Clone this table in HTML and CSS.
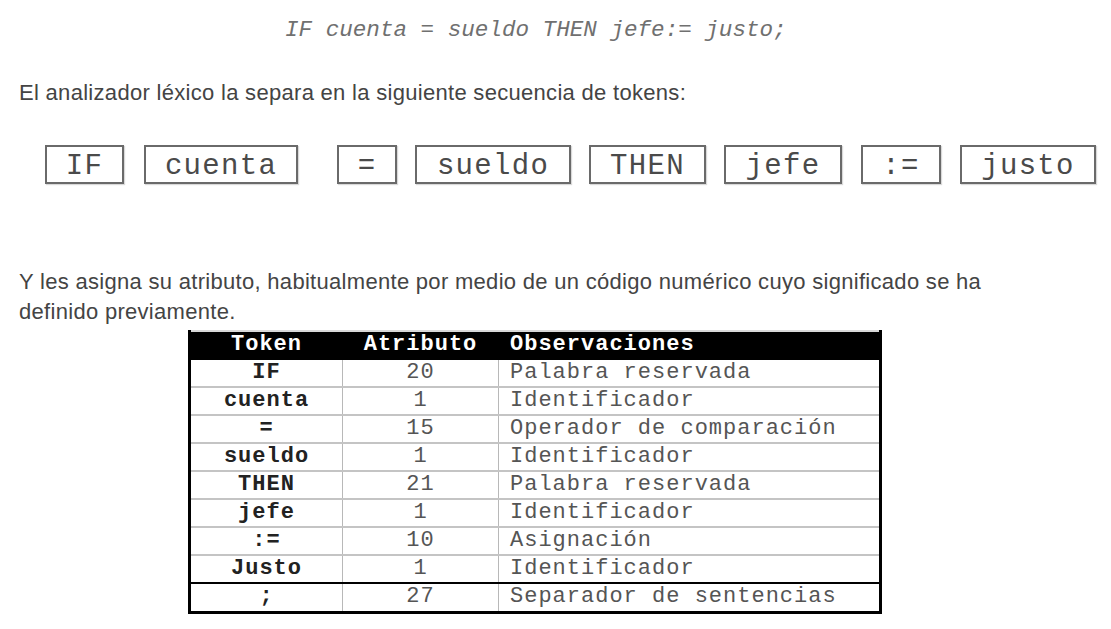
FILE: index.html
```html
<!DOCTYPE html>
<html lang="es">
<head>
<meta charset="utf-8">
<link rel="stylesheet" href="styles.css">
</head>
<body>
<div class="page">
  <p class="code">IF cuenta = sueldo THEN jefe:= justo;</p>
  <p class="text p1">El analizador léxico la separa en la siguiente secuencia de tokens:</p>
  <div class="tokens">
    <span class="tok w-if">IF</span>
    <span class="tok w-cuenta">cuenta</span>
    <span class="tok w-eq">=</span>
    <span class="tok w-sueldo">sueldo</span>
    <span class="tok w-then">THEN</span>
    <span class="tok w-jefe">jefe</span>
    <span class="tok w-asig">:=</span>
    <span class="tok w-justo">justo</span>
  </div>
  <p class="text p2">Y les asigna su atributo, habitualmente por medio de un código numérico cuyo significado se ha definido previamente.</p>
  <div class="table-wrap">
    <table class="tt">
      <thead>
        <tr><th class="c1">Token</th><th class="c2">Atributo</th><th class="c3">Observaciones</th></tr>
      </thead>
      <tbody>
        <tr><td class="c1">IF</td><td class="c2">20</td><td class="c3">Palabra reservada</td></tr>
        <tr><td class="c1">cuenta</td><td class="c2">1</td><td class="c3">Identificador</td></tr>
        <tr><td class="c1">=</td><td class="c2">15</td><td class="c3">Operador de comparación</td></tr>
        <tr><td class="c1">sueldo</td><td class="c2">1</td><td class="c3">Identificador</td></tr>
        <tr><td class="c1">THEN</td><td class="c2">21</td><td class="c3">Palabra reservada</td></tr>
        <tr><td class="c1">jefe</td><td class="c2">1</td><td class="c3">Identificador</td></tr>
        <tr><td class="c1">:=</td><td class="c2">10</td><td class="c3">Asignación</td></tr>
        <tr><td class="c1">Justo</td><td class="c2">1</td><td class="c3">Identificador</td></tr>
        <tr class="last"><td class="c1">;</td><td class="c2">27</td><td class="c3">Separador de sentencias</td></tr>
      </tbody>
    </table>
  </div>
</div>
</body>
</html>
```

FILE: styles.css
```css
html, body {
  margin: 0;
  padding: 0;
  background: #ffffff;
}

.page {
  width: 1111px;
  height: 629px;
  overflow: hidden;
}

.code {
  margin: 0;
  padding: 17px 0 0 285px;
  font-family: "Liberation Mono", "Courier New", monospace;
  font-style: italic;
  font-size: 22.6px;
  line-height: 26px;
  color: #707070;
  white-space: pre;
}

.text {
  margin: 0;
  padding-left: 19px;
  font-family: "Liberation Sans", Arial, sans-serif;
  font-size: 22px;
  letter-spacing: 0.3px;
  line-height: 30px;
  color: #444444;
}

.p1 {
  margin-top: 35px;
}

.p2 {
  margin-top: 83px;
  width: 1000px;
}

.tokens {
  display: flex;
  margin-top: 37px;
  padding-left: 45px;
  gap: 18px;
}

.tok {
  box-sizing: border-box;
  height: 39px;
  padding-top: 4px;
  border: 2px solid #6a6a6a;
  box-shadow: 1px 1px 1px rgba(0, 0, 0, 0.15);
  display: flex;
  align-items: center;
  justify-content: center;
  font-family: "Liberation Mono", "Courier New", monospace;
  font-size: 29px;
  letter-spacing: 1.3px;
  color: #4a4a4a;
}

.w-if { width: 79px; }
.w-cuenta { width: 154px; margin-left: 2px; }
.w-eq { width: 60px; margin-left: 21px; }
.w-sueldo { width: 156px; }
.w-then { width: 117px; }
.w-jefe { width: 118px; }
.w-asig { width: 80px; margin-left: 1px; }
.w-justo { width: 136px; margin-left: 1px; }

.table-wrap {
  margin-top: 3px;
  padding-left: 188px;
}

.tt {
  border-collapse: collapse;
  border-top: 2px solid #d8d8d8;
  font-family: "Liberation Mono", "Courier New", monospace;
  font-size: 22px;
  letter-spacing: 1px;
  color: #555555;
}

.tt th, .tt td {
  box-sizing: border-box;
  height: 28px;
  padding: 0;
  line-height: 26px;
  border-left: 1px solid #b8b8b8;
  border-right: 1px solid #b8b8b8;
  border-bottom: 2px solid #c4c4c4;
}

.tt th {
  background: #000000;
  color: #ffffff;
  font-weight: bold;
  height: 26px;
  border-color: #000000;
}

.tt th.c1, .tt td.c1 {
  border-left: 3px solid #000000;
}

.tt th.c3, .tt td.c3 {
  border-right: 3px solid #000000;
}

.c1 {
  width: 153px;
  text-align: center;
}

.tt td.c1 {
  font-weight: bold;
  color: #222222;
}

.c2 {
  width: 156px;
  text-align: center;
}

.c3 {
  width: 382px;
  text-align: left;
  padding-left: 11px !important;
}

.tt tr:nth-child(8) td {
  border-bottom: 2px solid #000000;
}

.tt tr.last td {
  height: 29px;
  border-bottom: 3px solid #000000;
}
```
